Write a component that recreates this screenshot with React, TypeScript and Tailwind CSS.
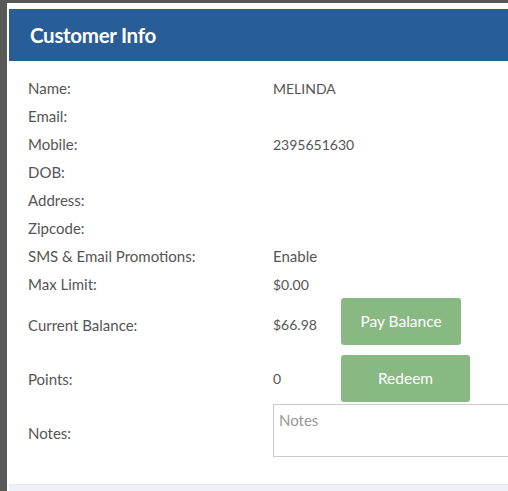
const font = "font-['Lato','Liberation_Sans',sans-serif]";

type Row = { label: string; value?: string; numeric?: boolean };

const simpleRows: Row[] = [
  { label: "Name:", value: "MELINDA", numeric: true },
  { label: "Email:" },
  { label: "Mobile:", value: "2395651630", numeric: true },
  { label: "DOB:" },
  { label: "Address:" },
  { label: "Zipcode:" },
  { label: "SMS & Email Promotions:", value: "Enable" },
  { label: "Max Limit:", value: "$0.00", numeric: true },
];

export default function App() {
  return (
    <div className={`min-h-[491px] bg-[#595959] pl-[7px] pt-[3px] ${font}`}>
      <div className="flex h-[488px] flex-col overflow-hidden bg-white pl-[2px] pt-[6px]">
        <div className="flex h-[52px] shrink-0 items-center bg-[#295d98] pl-[21px]">
          <h1 className="text-[20.5px] font-bold tracking-[-0.3px] text-white">Customer Info</h1>
        </div>

        <div className="flex-1 pl-[19px] pt-[13px] text-[15px] text-[#555]">
          {simpleRows.map((row) => (
            <div key={row.label} className="flex h-[28px] items-center">
              <span className="w-[245px] shrink-0">{row.label}</span>
              <span className={row.numeric ? "text-[14px]" : ""}>{row.value}</span>
            </div>
          ))}

          <div className="flex h-[57px] items-start">
            <span className="mt-[17px] w-[245px] shrink-0 leading-[20px]">Current Balance:</span>
            <span className="mt-[17px] w-[68px] shrink-0 text-[14px] leading-[20px]">$66.98</span>
            <button className="h-[47px] w-[120px] rounded-[3px] bg-[#88b982] text-[15.5px] text-white">
              Pay Balance
            </button>
          </div>

          <div className="flex h-[49px] items-start">
            <span className="mt-[14px] w-[245px] shrink-0 leading-[20px]">Points:</span>
            <span className="mt-[14px] w-[68px] shrink-0 text-[14px] leading-[20px]">0</span>
            <button className="h-[47px] w-[129px] rounded-[3px] bg-[#88b982] text-[15.5px] text-white">
              Redeem
            </button>
          </div>

          <div className="flex h-[53px] items-start">
            <span className="mt-[19px] w-[245px] shrink-0 leading-[20px]">Notes:</span>
            <textarea
              placeholder="Notes"
              className="h-[53px] w-[260px] shrink-0 resize-none border border-[#cccccc] px-[5px] py-[5px] text-[15px] leading-[20px] text-[#555] placeholder:text-[#999] focus:outline-none"
            />
          </div>
        </div>

        <div className="h-[7px] shrink-0 border-t border-[#e3e8ee] bg-[#eef2f7]" />
      </div>
    </div>
  );
}
